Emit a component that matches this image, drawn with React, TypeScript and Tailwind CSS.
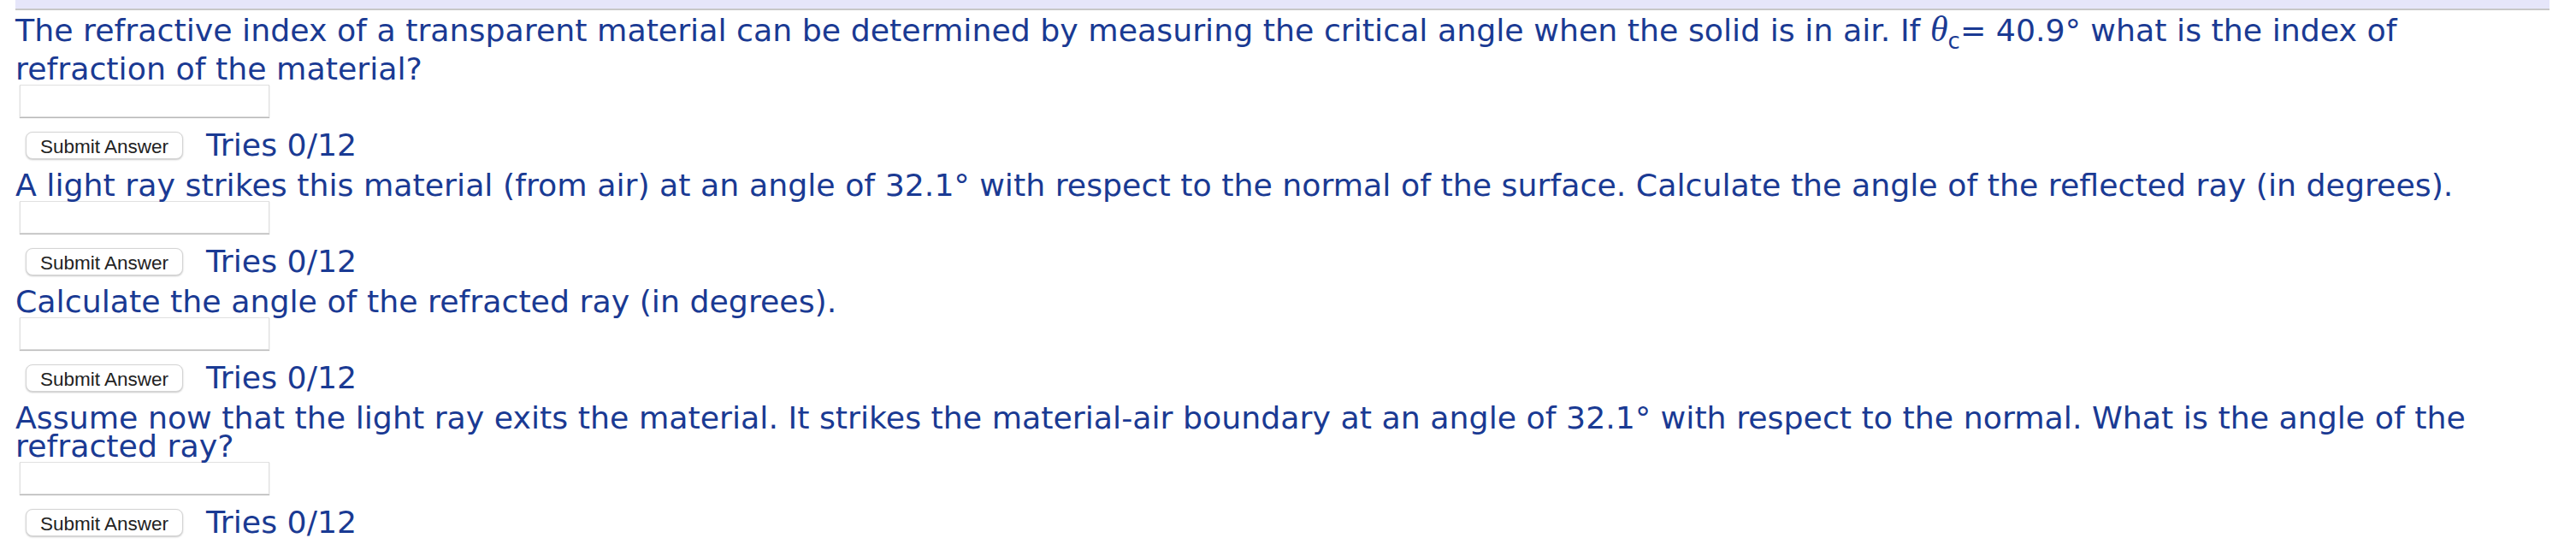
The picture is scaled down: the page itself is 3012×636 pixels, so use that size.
const textFont = { fontFamily: '"DejaVu Sans", Verdana, sans-serif' };

const questions = [
  "A light ray strikes this material (from air) at an angle of 32.1° with respect to the normal of the surface. Calculate the angle of the reflected ray (in degrees).",
  "Calculate the angle of the refracted ray (in degrees).",
  "Assume now that the light ray exits the material. It strikes the material-air boundary at an angle of 32.1° with respect to the normal. What is the angle of the refracted ray?",
];

function AnswerRow({ first }: { first?: boolean }) {
  return (
    <>
      <div className={`${first ? "-mt-[4px]" : "mt-[2px]"} pl-[5px]`}>
        <input
          type="text"
          className="block h-[38px] w-[292px] border border-[#e0e0e0] bg-white shadow-[0_1px_1px_rgba(0,0,0,0.28)] outline-none"
        />
      </div>
      <div className="mt-[17px] flex h-[32px] items-center pl-[12px]">
        <button
          type="button"
          className="h-[32px] w-[184px] rounded-[8px] border border-[#d4d4d4] bg-white text-[22.5px] text-[#222] shadow-[0_1px_2px_rgba(0,0,0,0.22)]"
          style={{ fontFamily: '"Liberation Sans", Arial, sans-serif' }}
        >
          Submit Answer
        </button>
        <span className="ml-[27px] text-[36.3px] leading-[32px]">Tries 0/12</span>
      </div>
    </>
  );
}

export default function App() {
  return (
    <div className="min-h-[636px] bg-white">
      <div className="ml-[18px] w-[2963px] text-[#1a3a93]" style={textFont}>
        <div className="h-[12px] border-b-2 border-[#c8c8c8] bg-[#e6e6fa]" />

        <div className="w-[2950px]">
          <p className="mt-[1px] text-[36.3px] leading-[45px]">
            The refractive index of a transparent material can be determined by measuring the critical angle when the
            solid is in air. If{" "}
            <i
              className="text-[42px] leading-[0px]"
              style={{ fontFamily: '"Liberation Serif", "Times New Roman", serif' }}
            >
              θ
            </i>
            <span className="text-[26px] leading-[0px] align-[-9px]">c</span>= 40.9° what is the index of refraction of
            the material?
          </p>
          <AnswerRow first />

          {questions.map((q) => (
            <div key={q}>
              <p className="mt-[14px] text-[36.3px] leading-[33px]">{q}</p>
              <AnswerRow />
            </div>
          ))}
        </div>
      </div>
    </div>
  );
}
